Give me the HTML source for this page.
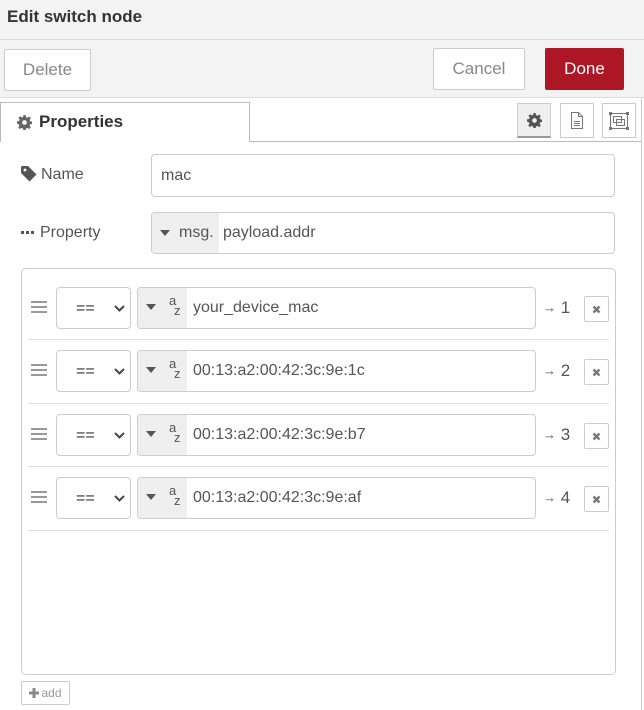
<!DOCTYPE html>
<html><head><meta charset="utf-8"><style>
*{box-sizing:border-box;margin:0;padding:0}
body{width:644px;height:710px;overflow:hidden;background:#fff;font-family:"Liberation Sans",sans-serif;color:#555;position:relative;font-size:16px}
.a{position:absolute}
.hdr{left:0;top:0;width:644px;height:40px;background:#f3f3f3;border-bottom:1px solid #ddd}
.hdr span{position:absolute;left:7px;top:7px;font-weight:bold;font-size:17px;color:#333}
.tb{left:0;top:40px;width:644px;height:58px;background:#f3f3f3;border-bottom:1px solid #ddd}
.btn{position:absolute;background:#fff;border:1px solid #ccc;border-radius:2px;color:#888;font-size:17px;display:flex;align-items:center;justify-content:center}
.done{background:#ad1625;border-color:#ad1625;color:#fff}
.tab{left:0;top:102px;width:250px;height:40px;border:1px solid #bbb;border-bottom:none;background:#fff;font-weight:bold;color:#333;font-size:17px}
.tabline{left:249px;top:141px;width:392px;height:1px;background:#bbb}
.ib{position:absolute;top:103px;width:34px;height:35px;border:1px solid #ccc;background:#fff;display:flex;align-items:center;justify-content:center}
.rb{left:641px;top:98px;width:1px;height:612px;background:#ccc}
.inp{position:absolute;border:1px solid #ccc;border-radius:4px;background:#fff;font-size:16px;color:#555}
.lbl{position:absolute;font-size:16px;color:#555}
.grey{position:absolute;left:0;top:0;bottom:0;background:#efefef;border-radius:4px 0 0 4px}
.cont{left:21px;top:268px;width:595px;height:407px;border:1px solid #ccc;border-radius:5px}
.sep{position:absolute;left:28px;width:581px;height:1px;background:#ddd}
.x{position:absolute;left:584px;width:25px;height:26px;border:1px solid #ccc;border-radius:2px;background:#fff;display:flex;align-items:center;justify-content:center}
.eq{left:19px;top:12px;color:#333}
.out{left:543px;top:11px;white-space:nowrap;font-size:17px}
.out b{font-weight:normal;font-size:13px;position:relative;top:-1px}
</style></head><body>
<div class="a hdr"><span>Edit switch node</span></div>
<div class="a tb"></div>
<div class="btn" style="left:4px;top:49px;width:87px;height:42px">Delete</div>
<div class="btn" style="left:433px;top:48px;width:92px;height:42px">Cancel</div>
<div class="btn done" style="left:545px;top:48px;width:79px;height:42px">Done</div>
<div class="a tab"><svg class="a" style="left:16px;top:12px" width="15" height="15" viewBox="0 0 16 16"><path fill="#666" d="M6.8 0h2.4l.4 2.2 1.5.7 1.9-1.3 1.7 1.7-1.3 1.9.7 1.5 2.2.4v2.4l-2.2.4-.7 1.5 1.3 1.9-1.7 1.7-1.9-1.3-1.5.7-.4 2.2H6.8l-.4-2.2-1.5-.7-1.9 1.3-1.7-1.7 1.3-1.9-.7-1.5L0 9.2V6.8l2.2-.4.7-1.5-1.3-1.9 1.7-1.7 1.9 1.3 1.5-.7zM8 5.5A2.5 2.5 0 1 0 8 10.5 2.5 2.5 0 1 0 8 5.5z"/></svg><span class="a" style="left:38px;top:9px">Properties</span></div>
<div class="a tabline"></div>
<div class="ib" style="left:517px;background:#efefef;border-bottom:2px solid #999"><svg width="15" height="15" viewBox="0 0 16 16"><path fill="#555" d="M6.8 0h2.4l.4 2.2 1.5.7 1.9-1.3 1.7 1.7-1.3 1.9.7 1.5 2.2.4v2.4l-2.2.4-.7 1.5 1.3 1.9-1.7 1.7-1.9-1.3-1.5.7-.4 2.2H6.8l-.4-2.2-1.5-.7-1.9 1.3-1.7-1.7 1.3-1.9-.7-1.5L0 9.2V6.8l2.2-.4.7-1.5-1.3-1.9 1.7-1.7 1.9 1.3 1.5-.7zM8 5.5A2.5 2.5 0 1 0 8 10.5 2.5 2.5 0 1 0 8 5.5z"/></svg></div>
<div class="ib" style="left:560px"><svg width="14" height="17" viewBox="0 0 14 17"><path fill="none" stroke="#777" d="M1.5 .5h7l4 4v12h-11z M8.5 .5v4h4 M4 9.5h6 M4 11.5h6 M4 13.5h6"/></svg></div>
<div class="ib" style="left:602px"><svg width="20" height="18" viewBox="0 0 20 18"><g fill="none" stroke="#777"><rect x="1.5" y="1.5" width="17" height="15"/><rect x="4.5" y="4.5" width="8" height="6"/><rect x="7.5" y="7.5" width="8" height="6"/></g><g fill="#777"><rect x="0" y="0" width="3" height="3"/><rect x="17" y="0" width="3" height="3"/><rect x="0" y="15" width="3" height="3"/><rect x="17" y="15" width="3" height="3"/></g></svg></div>
<div class="a rb"></div>

<svg class="a" style="left:21px;top:166px" width="16" height="16" viewBox="0 0 16 16"><path fill="#555" d="M0 1.5Q0 0 1.5 0H7l8.5 8.5-7 7L0 7zM4 2.5a1.5 1.5 0 1 0 .01 0z"/></svg>
<div class="lbl" style="left:41px;top:166px">Name</div>
<div class="inp" style="left:151px;top:154px;width:464px;height:43px"><span class="a" style="left:9px;top:12px">mac</span></div>
<svg class="a" style="left:21px;top:231px" width="16" height="4"><rect x="0" y="0" width="3" height="3" fill="#555"/><rect x="5" y="0" width="3" height="3" fill="#555"/><rect x="10" y="0" width="3" height="3" fill="#555"/></svg>
<div class="lbl" style="left:40px;top:224px">Property</div>
<div class="inp" style="left:151px;top:212px;width:464px;height:42px"><div class="grey" style="width:67px"></div>
<svg class="a" style="left:8px;top:17px" width="10" height="6"><path d="M0 0h10L5 6z" fill="#555"/></svg>
<span class="a" style="left:27px;top:11px">msg.</span><span class="a" style="left:71px;top:11px">payload.addr</span></div>

<div class="a cont"></div>

<div style="position:absolute;left:0;top:287px">
<svg class="a" style="left:31px;top:14px" width="16" height="12"><rect y="0" width="16" height="2" fill="#999"/><rect y="5" width="16" height="2" fill="#999"/><rect y="10" width="16" height="2" fill="#999"/></svg>
<div class="inp" style="left:56px;top:0;width:75px;height:42px"><span class="a eq">==</span><svg class="a" style="left:57px;top:17px" width="11" height="7"><path d="M1 1l4.5 4.5L10 1" stroke="#444" stroke-width="2" fill="none"/></svg></div>
<div class="inp" style="left:137px;top:0;width:399px;height:42px"><div class="grey" style="width:49px"></div><svg class="a" style="left:8px;top:16px" width="10" height="6"><path d="M0 0h10L5 6z" fill="#555"/></svg><span class="a" style="left:31px;top:5px;font-size:13px">a</span><span class="a" style="left:36px;top:15px;font-size:13px">z</span><span class="a" style="left:55px;top:11px">your_device_mac</span></div>
<span class="a out"><b>→</b> 1</span>
<div class="x" style="top:9px"><svg width="9" height="9"><path d="M1.5 1.5l6 6M7.5 1.5l-6 6" stroke="#777" stroke-width="2.4"/></svg></div>
</div>
<div class="sep" style="top:339px"></div>

<div style="position:absolute;left:0;top:350px">
<svg class="a" style="left:31px;top:14px" width="16" height="12"><rect y="0" width="16" height="2" fill="#999"/><rect y="5" width="16" height="2" fill="#999"/><rect y="10" width="16" height="2" fill="#999"/></svg>
<div class="inp" style="left:56px;top:0;width:75px;height:42px"><span class="a eq">==</span><svg class="a" style="left:57px;top:17px" width="11" height="7"><path d="M1 1l4.5 4.5L10 1" stroke="#444" stroke-width="2" fill="none"/></svg></div>
<div class="inp" style="left:137px;top:0;width:399px;height:42px"><div class="grey" style="width:49px"></div><svg class="a" style="left:8px;top:16px" width="10" height="6"><path d="M0 0h10L5 6z" fill="#555"/></svg><span class="a" style="left:31px;top:5px;font-size:13px">a</span><span class="a" style="left:36px;top:15px;font-size:13px">z</span><span class="a" style="left:55px;top:11px">00:13:a2:00:42:3c:9e:1c</span></div>
<span class="a out"><b>→</b> 2</span>
<div class="x" style="top:9px"><svg width="9" height="9"><path d="M1.5 1.5l6 6M7.5 1.5l-6 6" stroke="#777" stroke-width="2.4"/></svg></div>
</div>
<div class="sep" style="top:403px"></div>

<div style="position:absolute;left:0;top:414px">
<svg class="a" style="left:31px;top:14px" width="16" height="12"><rect y="0" width="16" height="2" fill="#999"/><rect y="5" width="16" height="2" fill="#999"/><rect y="10" width="16" height="2" fill="#999"/></svg>
<div class="inp" style="left:56px;top:0;width:75px;height:42px"><span class="a eq">==</span><svg class="a" style="left:57px;top:17px" width="11" height="7"><path d="M1 1l4.5 4.5L10 1" stroke="#444" stroke-width="2" fill="none"/></svg></div>
<div class="inp" style="left:137px;top:0;width:399px;height:42px"><div class="grey" style="width:49px"></div><svg class="a" style="left:8px;top:16px" width="10" height="6"><path d="M0 0h10L5 6z" fill="#555"/></svg><span class="a" style="left:31px;top:5px;font-size:13px">a</span><span class="a" style="left:36px;top:15px;font-size:13px">z</span><span class="a" style="left:55px;top:11px">00:13:a2:00:42:3c:9e:b7</span></div>
<span class="a out"><b>→</b> 3</span>
<div class="x" style="top:9px"><svg width="9" height="9"><path d="M1.5 1.5l6 6M7.5 1.5l-6 6" stroke="#777" stroke-width="2.4"/></svg></div>
</div>
<div class="sep" style="top:466px"></div>

<div style="position:absolute;left:0;top:477px">
<svg class="a" style="left:31px;top:14px" width="16" height="12"><rect y="0" width="16" height="2" fill="#999"/><rect y="5" width="16" height="2" fill="#999"/><rect y="10" width="16" height="2" fill="#999"/></svg>
<div class="inp" style="left:56px;top:0;width:75px;height:42px"><span class="a eq">==</span><svg class="a" style="left:57px;top:17px" width="11" height="7"><path d="M1 1l4.5 4.5L10 1" stroke="#444" stroke-width="2" fill="none"/></svg></div>
<div class="inp" style="left:137px;top:0;width:399px;height:42px"><div class="grey" style="width:49px"></div><svg class="a" style="left:8px;top:16px" width="10" height="6"><path d="M0 0h10L5 6z" fill="#555"/></svg><span class="a" style="left:31px;top:5px;font-size:13px">a</span><span class="a" style="left:36px;top:15px;font-size:13px">z</span><span class="a" style="left:55px;top:11px">00:13:a2:00:42:3c:9e:af</span></div>
<span class="a out"><b>→</b> 4</span>
<div class="x" style="top:9px"><svg width="9" height="9"><path d="M1.5 1.5l6 6M7.5 1.5l-6 6" stroke="#777" stroke-width="2.4"/></svg></div>
</div>
<div class="sep" style="top:530px"></div>

<div class="btn" style="left:21px;top:681px;width:49px;height:24px;font-size:12px;color:#999"><svg width="10" height="10" style="margin-right:2px"><path d="M5 0v10M0 5h10" stroke="#888" stroke-width="3"/></svg>add</div>
</body></html>
